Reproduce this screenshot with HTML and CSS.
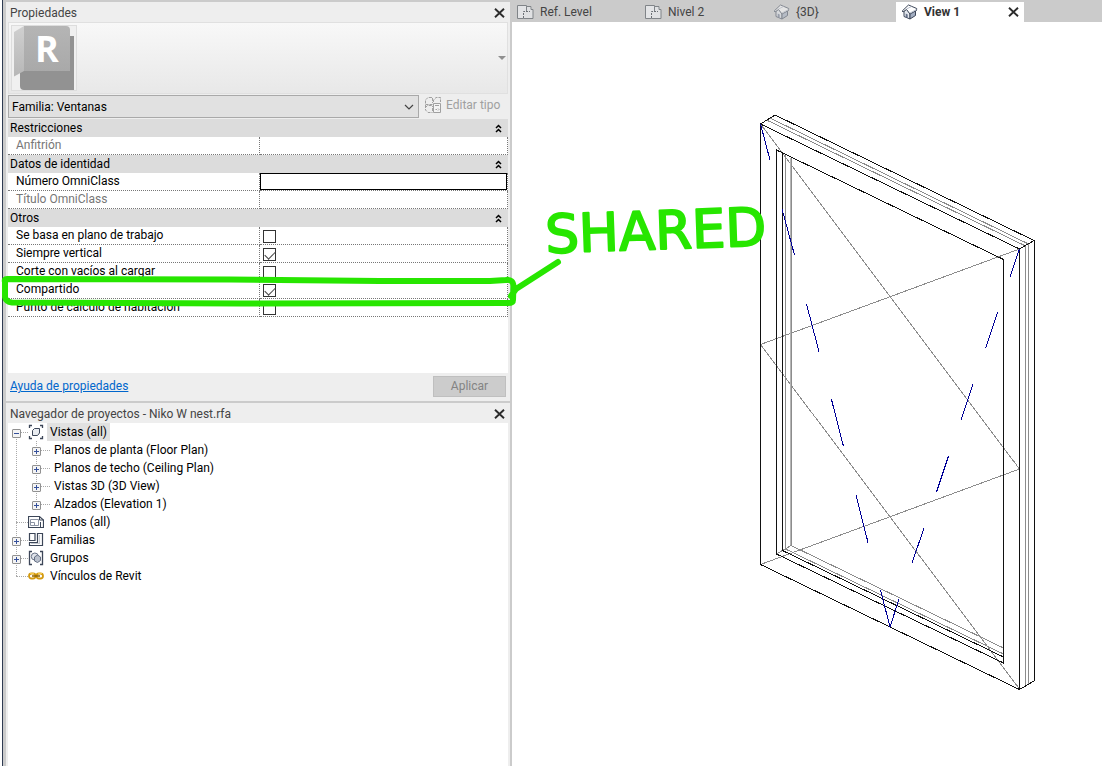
FILE: index.html
```html
<!DOCTYPE html>
<html lang="es">
<head>
<meta charset="utf-8">
<title>View 1</title>
<link rel="stylesheet" href="styles.css">
</head>
<body>
<svg class="sprite" aria-hidden="true">
  <symbol id="i-close" viewBox="0 0 11 10"><path d="M1 .8 10 9.2M10 .8 1 9.2" fill="none" stroke="currentColor" stroke-width="1.9"/></symbol>
  <symbol id="i-collapse" viewBox="0 0 7 9"><path d="M1 4 3.5 1.5 6 4M1 8 3.5 5.500 6 8" fill="none" stroke="#000" stroke-width="1.5"/></symbol>
  <symbol id="i-plan" viewBox="0 0 17 16"><path d="M.5 1.500H9.500V14.500H.5Z" fill="#e3e4e6" stroke="#808488"/><path d="M9.500 2.500H14.500V5.500H16V14.500H6.500V7.500H9.500Z" fill="#e0e1e3"/><path d="M9.500 7V2.500H14V5.500H16V14.500H6.500" fill="none" stroke="#808488"/><path d="M6.500 14V7.500H13" fill="none" stroke="#6c7075" stroke-dasharray="2 1"/></symbol>
  <symbol id="i-house" viewBox="0 0 16 16"><path d="M2.500 7 5 5 8.500 9.500V15L2.500 12.500Z" fill="#e4e8ee" stroke="#3c4658" stroke-linejoin="round"/><path d="M8.500 9 14 6V11.500L8.500 15Z" fill="#a3aec2" stroke="#3c4658" stroke-linejoin="round"/><path d="M.7 7 7 1 15.200 4.500 15 6.500 8.500 10 5 5.500 1.500 8Z" fill="#fff" stroke="#3c4658" stroke-linejoin="round"/><path d="M5 5 10 2.500M8.500 9 15 5.500" fill="none" stroke="#aab3c3" stroke-width=".8"/><path d="M4.200 13V9.500L6.200 10.500V14Z" fill="#66728a"/></symbol>
</svg>

<div class="app">
  <div class="dock">
    <section class="panel properties">
      <header class="title"><h2>Propiedades</h2><button class="x" aria-label="Cerrar Propiedades"><svg width="11" height="10"><use href="#i-close"/></svg></button></header>
      <div class="preview">
        <div class="logo">
          <svg width="64" height="64" viewBox="0 0 64 64">
            <defs>
              <linearGradient id="face" x2="0" y2="1"><stop stop-color="#b5b5b5"/><stop offset="1" stop-color="#a9a9a9"/></linearGradient>
              <linearGradient id="side" x2="0" y2="1"><stop stop-color="#d0d0d0"/><stop offset="1" stop-color="#b7b7b7"/></linearGradient>
            </defs>
            <path d="M8 10H62V64H12Q8 64 8 60Z" fill="#929292"/>
            <path d="M56 0H64V10H56Z" fill="#f0f0f0"/>
            <path d="M2 6 12 0V45L2 50.500Z" fill="url(#side)"/>
            <path d="M12 0H54Q58 0 58 4V45H12Z" fill="url(#face)"/>
            <text x="23" y="36" class="logo-letter">R</text>
          </svg>
        </div>
        <button class="preview-menu" aria-label="Tipos"><svg width="8" height="4" viewBox="0 0 8 4"><path d="M0 0H8L4 4Z" fill="#8f8f8f"/></svg></button>
      </div>
      <div class="type-row">
        <span class="family"><select aria-label="Familia"><option>Familia: Ventanas</option></select><svg width="10" height="6" viewBox="0 0 10 6"><path d="M1 1 5 5 9 1" fill="none" stroke="#444" stroke-width="1.2"/></svg></span>
        <button class="edit-type" disabled><svg width="17" height="17" viewBox="0 0 17 17" fill="none" stroke="#a0a0a0"><path d="M7.500 7.500H.5V3L3 .5H7.500V6M8.500 5V3L11 .5H15.500V5M.5 8V13L3 15.500H7.500M.5 10.500 2.500 8.500H7.500M7.500 14V9" stroke-dasharray="3 1"/><path d="M8.500 6.500H15.500V15.500H8.500Z" fill="#f3f3f3"/><path d="M10 8.500H14M10.500 12.500H12M13 11.500 14 12.500 13 13.500" /></svg>Editar tipo</button>
      </div>
      <div class="grid-area">
        <table class="params">
          <colgroup><col class="name-col"><col></colgroup>
          <tbody>
            <tr class="group"><th colspan="2"><div><span>Restricciones</span><button aria-label="Contraer Restricciones"><svg width="7" height="9"><use href="#i-collapse"/></svg></button></div></th></tr>
            <tr class="off"><td>Anfitrión</td><td></td></tr>
          </tbody>
          <tbody>
            <tr class="group"><th colspan="2"><div><span>Datos de identidad</span><button aria-label="Contraer Datos de identidad"><svg width="7" height="9"><use href="#i-collapse"/></svg></button></div></th></tr>
            <tr><td><label for="omni">Número OmniClass</label></td><td><input id="omni" type="text"></td></tr>
            <tr class="off"><td>Título OmniClass</td><td></td></tr>
          </tbody>
          <tbody>
            <tr class="group"><th colspan="2"><div><span>Otros</span><button aria-label="Contraer Otros"><svg width="7" height="9"><use href="#i-collapse"/></svg></button></div></th></tr>
            <tr><td><label for="c1">Se basa en plano de trabajo</label></td><td><input id="c1" type="checkbox"></td></tr>
            <tr><td><label for="c2">Siempre vertical</label></td><td><input id="c2" type="checkbox" checked></td></tr>
            <tr><td><label for="c3">Corte con vacíos al cargar</label></td><td><input id="c3" type="checkbox"></td></tr>
            <tr><td><label for="c4">Compartido</label></td><td><input id="c4" type="checkbox" checked></td></tr>
            <tr><td><label for="c5">Punto de cálculo de habitación</label></td><td><input id="c5" type="checkbox"></td></tr>
          </tbody>
        </table>
      </div>
      <footer class="actions"><a href="#ayuda">Ayuda de propiedades</a><button disabled>Aplicar</button></footer>
    </section>

    <section class="panel browser">
      <header class="title"><h2>Navegador de proyectos - Niko W nest.rfa</h2><button class="x" aria-label="Cerrar Navegador"><svg width="11" height="10"><use href="#i-close"/></svg></button></header>
      <div class="tree-area">
        <ul class="tree">
          <li>
            <div class="node"><button class="toggle open" aria-label="Contraer Vistas"></button><i class="dots"></i>
              <svg width="16" height="16" viewBox="0 0 16 16" fill="none" stroke="#3c4658"><path d="M4 1.500H1.500V4M12 1.500H14.500V4M1.500 12V14.500H4M14.500 12V14.500H12" stroke-width="1.3"/><path d="M4.500 6.500 6.500 4.500H11.500V9L9.500 11.500H4.500Z" fill="#e9ecf0"/></svg>
              <span class="label selected">Vistas (all)</span></div>
            <ul>
              <li><div class="node"><button class="toggle" aria-label="Expandir Planos de planta"></button><i class="dots"></i><span class="label">Planos de planta (Floor Plan)</span></div></li>
              <li><div class="node"><button class="toggle" aria-label="Expandir Planos de techo"></button><i class="dots"></i><span class="label">Planos de techo (Ceiling Plan)</span></div></li>
              <li><div class="node"><button class="toggle" aria-label="Expandir Vistas 3D"></button><i class="dots"></i><span class="label">Vistas 3D (3D View)</span></div></li>
              <li><div class="node"><button class="toggle" aria-label="Expandir Alzados"></button><i class="dots"></i><span class="label">Alzados (Elevation 1)</span></div></li>
            </ul>
          </li>
          <li><div class="node leaf"><i class="dots"></i>
            <svg width="16" height="16" viewBox="0 0 16 16" fill="none" stroke="#3c4658"><path d="M.5 2.500H11.500L15.500 6V13.500H.5Z" fill="#fff" stroke-width="1.2"/><path d="M11.500 2.500V6H15.500M12.500 8V13" /><path d="M2.500 5.500H10.500V11.500H2.500ZM3 8.500H6.500V11" stroke="#8b93a3"/></svg>
            <span class="label">Planos (all)</span></div></li>
          <li><div class="node"><button class="toggle" aria-label="Expandir Familias"></button><i class="dots"></i>
            <svg width="16" height="16" viewBox="0 0 16 16" fill="#fff" stroke="#3c4658" stroke-width="1.2"><path d="M1.500 1.500H7V8.500H1.500ZM9.500 1.500H14.500V13.500H1.500V10.500H9.500Z"/><path d="M11.500 3V11.500H3" stroke="#c3c8d0" fill="none"/></svg>
            <span class="label">Familias</span></div></li>
          <li><div class="node"><button class="toggle" aria-label="Expandir Grupos"></button><i class="dots"></i>
            <svg width="16" height="16" viewBox="0 0 16 16" fill="none" stroke="#3c4658"><path d="M4 1.500H1.500V14.500H4M12 1.500H14.500V14.500H12" stroke-width="1.3"/><circle cx="6.800" cy="6.500" r="3.500" fill="#dfe3ea" stroke="#667085"/><path d="M6.500 7 9.500 5 12.500 7V10.500L9.500 12.500 6.500 11Z" fill="#b9c0cc" stroke="#667085"/></svg>
            <span class="label">Grupos</span></div></li>
          <li><div class="node leaf"><i class="dots"></i>
            <svg width="16" height="16" viewBox="0 0 16 16" fill="none" stroke="#d39a10" stroke-width="1.800"><rect x="1" y="5.500" width="6.500" height="5" rx="2.500"/><rect x="8.500" y="5.500" width="6.500" height="5" rx="2.500"/><path d="M4 8H12" stroke="#8b6100" stroke-width="1.500"/><path d="M2 5.500H6M10 5.500H14" stroke="#f6c945" stroke-width="1"/></svg>
            <span class="label">Vínculos de Revit</span></div></li>
        </ul>
      </div>
    </section>
  </div>

  <main class="workspace">
    <nav class="tabs">
      <button class="tab"><svg width="17" height="16"><use href="#i-plan"/></svg><span>Ref. Level</span></button>
      <button class="tab"><svg width="17" height="16"><use href="#i-plan"/></svg><span>Nivel 2</span></button>
      <button class="tab dim"><svg width="16" height="16"><use href="#i-house"/></svg><span>{3D}</span></button>
      <div class="tab active"><svg width="16" height="16"><use href="#i-house"/></svg><span>View 1</span><button class="x" aria-label="Cerrar View 1"><svg width="11" height="10"><use href="#i-close"/></svg></button></div>
    </nav>
    <div class="view">
      <svg class="drawing" width="590" height="744" viewBox="512 22 590 744" role="img" aria-label="Ventana en 3D">
        <g stroke="#8c8c8c">
          <path d="M760.500 124 1019.500 469 760.500 564.500M1019.500 249 760.500 344.500 1019.500 689"/>
          <path d="M770 118 1028.500 244V684.500M766.500 120 1025.500 246V686"/>
          <path d="M785.500 155V549L1003.500 654M791 157V545.500L1003.500 648M776.500 554 791 545.500"/>
        </g>
        <path stroke="#b5b5b5" d="M790.500 158V545"/>
        <g stroke="#111">
          <path d="M760.500 124 1019.500 249V689.500L760.500 564.500ZM760.500 124 775 115 1034 240.500V681L1019.500 689.500M1019.500 249 1034 240.500"/>
          <path d="M776.500 150 1003.500 259.500V663L776.500 554Z"/>
          <path d="M782.500 153V550.500L1003.500 657"/>
        </g>
        <path stroke="#000096" d="M760.500 124 770 160M782 209 794.500 255M806.500 304 819 351.500M831.500 399.500 843.500 446.500M856 495 868 542.500M880.500 590 890 627 899 599M1019.500 249 1010 277M997.500 312.500 985.500 348.500M973 384 961 420M948.500 456 936.500 492M924 528 912 563"/>
      </svg>
    </div>
  </main>

  <svg class="markup" width="1102" height="766" viewBox="0 0 1102 766">
    <path d="M7 279 230 279.500 380 281 490 281 506 280Q513 279 513.500 286L513 300Q513 303 508 303L240 303.500 12 302.500Q6 302 5 297L5 282Q4 279 7 279ZM511 296 516 289 558 262"/>
    <text x="546" y="253" transform="rotate(-2 546 253)">SHARED</text>
  </svg>
</div>
</body>
</html>
```

FILE: styles.css
```css
* { box-sizing: border-box; }

body {
  margin: 0;
  font: 12px/18px Roboto, "Open Sans", sans-serif;
  color: #000;
  background: #fff;
}

button, input, select { font: inherit; color: inherit; margin: 0; padding: 0; }
button { border: 0; background: none; }
svg { display: block; flex: none; }
.sprite { position: absolute; width: 0; height: 0; }

.app {
  position: relative;
  display: grid;
  grid-template-columns: 512fr 590fr;
  min-height: 100vh;
  overflow: hidden;
}

/* Docked panels */
.dock {
  display: flex;
  flex-direction: column;
  min-width: 0;
  margin-left: 2px;
  padding: 2px 2px 0 3px;
  border-left: 1px solid #2e3b52;
  background: #cbcbcb;
  gap: 2px;
}
.panel { display: flex; flex-direction: column; padding: 0 2px; background: #eee; }
.browser { flex: 1; }

.title {
  display: flex;
  align-items: center;
  justify-content: space-between;
  height: 20px;
  padding: 2px 3px 0 2px;
  color: #444;
}
.title h2 { margin: 0; font-size: 12px; font-weight: 400; }
.x { color: #2b2b2b; }

.preview {
  display: flex;
  align-items: center;
  justify-content: space-between;
  height: 72px;
  padding: 2px 1px 2px 2px;
  border: 1px solid #e0e0e0;
  background: linear-gradient(#f8f8f8, #e8e8e8);
}
.logo { border: 1px solid #ddd; background: #f0f0f0; }
.logo svg { overflow: visible; }
.logo-letter { font: 700 36px "Open Sans", sans-serif; fill: #fff; }

.type-row { display: flex; gap: 6px; padding: 1px 0; }
.family {
  flex: 1;
  display: flex;
  align-items: center;
  height: 23px;
  padding: 0 4px 0 3px;
  border: 1px solid #a9a9a9;
  background: #e1e1e1;
}
.family select { flex: 1; appearance: none; border: 0; background: none; }
.edit-type { display: flex; align-items: center; gap: 4px; width: 83px; height: 20px; color: #a0a0a0; }

/* Parameter grid */
.grid-area { background: #fff; min-height: 254px; }
.params { width: 100%; table-layout: fixed; border-collapse: separate; border-spacing: 0; }
.name-col { width: 252px; }
.params th, .params td { height: 18px; padding: 0; line-height: 16px; text-align: left; font-weight: 400; vertical-align: top; }
.params td { border-right: 1px dotted #777; border-bottom: 1px dotted #777; }
.params td:first-child { padding-left: 8px; }
.group { background: #dcdcdc; }
.group div { display: flex; align-items: center; justify-content: space-between; height: 18px; padding: 0 6px 0 2px; }
.off { color: #777; }
.params input { display: block; }
.params input[type=text] { width: 100%; height: 17px; border: 1px solid #000; border-radius: 0; background: #fff; }
.params input[type=checkbox] {
  appearance: none;
  width: 13px;
  height: 13px;
  margin: 3px 0 0 3px;
  border: 1px solid #333;
  background: #fff;
}
.params input[type=checkbox]:checked::before {
  content: "";
  display: block;
  width: 9px;
  height: 5px;
  margin: 2px 1px;
  border: solid #444;
  border-width: 0 0 1px 1px;
  transform: rotate(-45deg);
}

.actions { display: flex; align-items: center; justify-content: space-between; height: 28px; padding: 0 2px 2px; }
.actions a { color: #0066cc; }
.actions button { width: 73px; height: 21px; border: 1px solid #bfbfbf; background: #ccc; color: #838383; }

/* Project tree */
.tree-area { flex: 1; background: #fff; }
.tree, .tree ul { margin: 0; padding: 0; list-style: none; }
.tree { padding-left: 4px; }
.tree ul { padding-left: 20px; }
.tree li {
  background: repeating-linear-gradient(#aaa 0 1px, transparent 1px 2px) 4px 0 / 1px 100% no-repeat;
}
.tree > li:first-child { background-position: 4px 10px; }
.tree > li:last-child, .tree ul > li:last-child { background-size: 1px 10px; }
.node { display: flex; align-items: center; height: 18px; }
.toggle {
  flex: none;
  width: 9px;
  height: 9px;
  margin-top: 2px;
  border: 1px solid #919191;
  border-radius: 1px;
  background:
    linear-gradient(#35509a, #35509a) center / 5px 1px no-repeat,
    linear-gradient(#35509a, #35509a) center / 1px 5px no-repeat,
    #f4f4f4;
}
.toggle.open { background: linear-gradient(#35509a, #35509a) center / 5px 1px no-repeat, #f4f4f4; }
.dots { flex: none; width: 7px; margin-top: 1px; border-top: 1px dotted #aaa; }
.leaf .dots { width: 12px; margin-left: 4px; }
.tree ul .dots { width: 9px; }
.label { padding: 0 3px 0 3px; margin-left: 3px; }
.tree ul .label { margin-left: 1px; }
.selected { background: #e1e1e1; }

/* Views */
.workspace { display: flex; flex-direction: column; min-width: 0; }
.tabs { display: flex; height: 22px; padding-top: 2px; background: #cbcbcb; }
.tab { flex: 0 1 128px; display: flex; align-items: center; gap: 6px; padding: 0 5px; color: #444; }
.tab.dim > svg { opacity: .5; }
.tab > svg { width: 17px; }
.active { background: #fff; font-weight: 700; color: #333; }
.active .x { margin-left: auto; }
.view { flex: 1; background: #fff; }
.drawing { fill: none; shape-rendering: crispEdges; }

/* Review markup laid over the window */
.markup { position: absolute; left: 0; top: 0; pointer-events: none; }
.markup path { fill: none; stroke: #27e600; stroke-width: 6px; stroke-linecap: round; stroke-linejoin: round; }
.markup text {
  font: 53px "DejaVu Sans", sans-serif;
  fill: #27e600;
  stroke: #27e600;
  stroke-width: 2px;
  stroke-linejoin: round;
}
```
